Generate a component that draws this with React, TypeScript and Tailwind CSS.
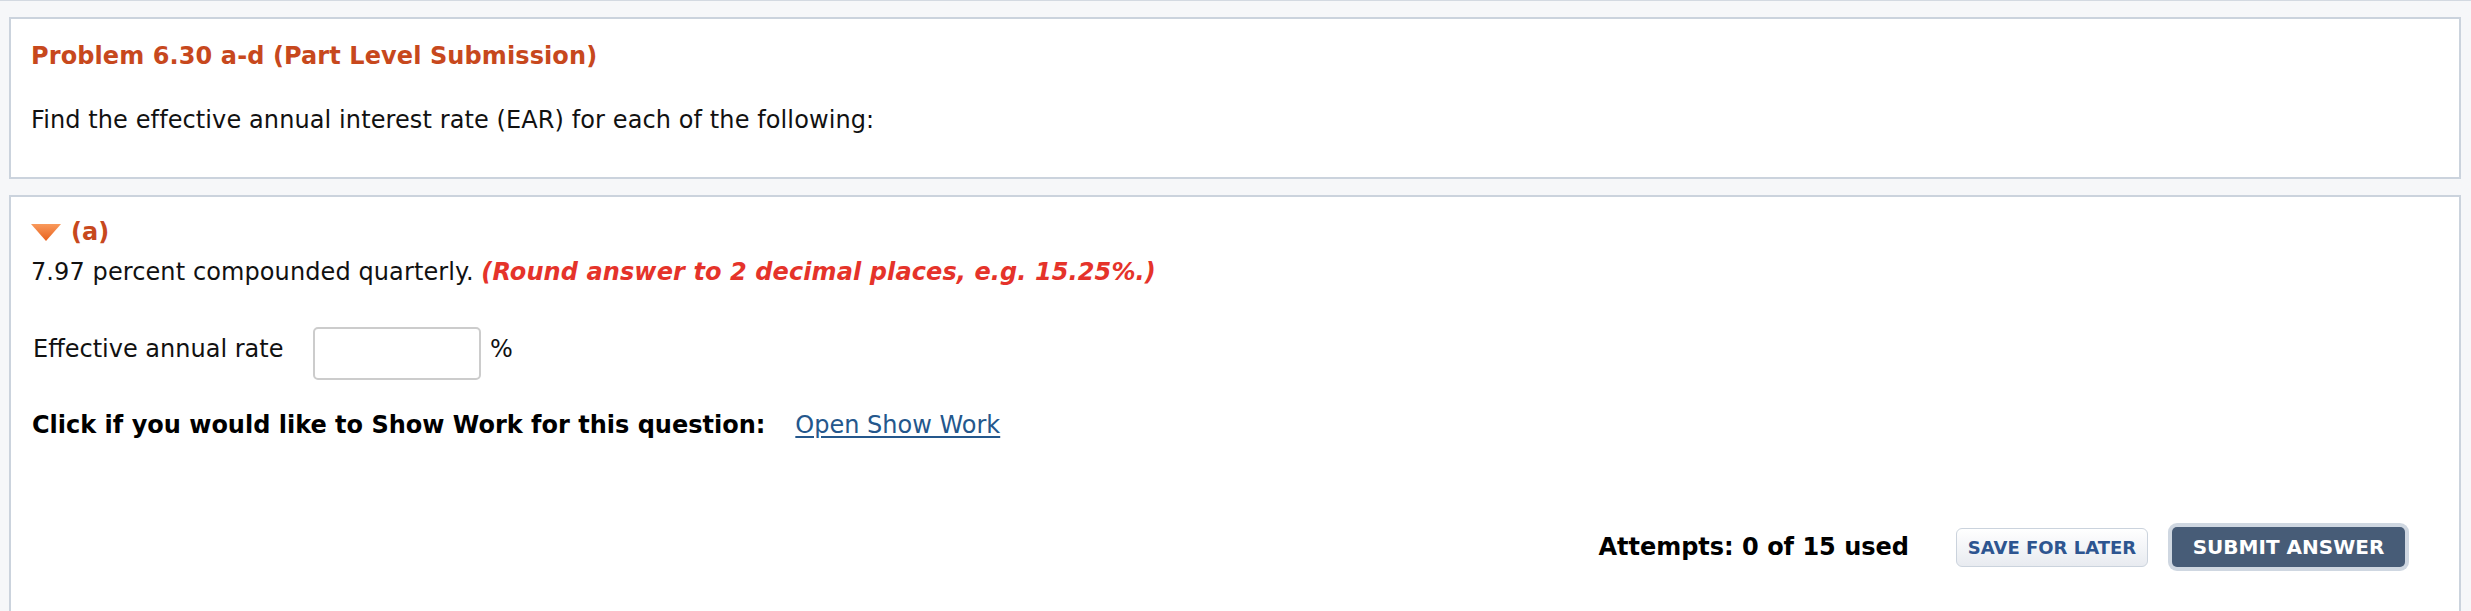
import React from "react";

const font = { fontFamily: '"DejaVu Sans", Verdana, sans-serif' };

function Triangle() {
  return (
    <svg width="30" height="18" viewBox="0 0 30 18" className="block">
      <defs>
        <linearGradient id="tg" x1="0" y1="0" x2="0" y2="1">
          <stop offset="0" stopColor="#f99a5c" />
          <stop offset="1" stopColor="#e8601c" />
        </linearGradient>
      </defs>
      <polygon points="0,0 30,0 15,17" fill="url(#tg)" />
    </svg>
  );
}

export default function App() {
  return (
    <div
      className="min-h-[611px] w-full border-t border-[#d3d9e1] bg-[#f6f7f9] pt-[16px] pl-[9px] pr-[10px] text-[24px] leading-[29px] text-[#111]"
      style={font}
    >
      <div className="border-2 border-[#cbd3dd] bg-white px-[20px] pt-[23px] pb-[42px]">
        <div className="font-bold tracking-[0.1px] text-[#c7481d]">Problem 6.30 a-d (Part Level Submission)</div>
        <div className="mt-[35px] tracking-[0.1px]">Find the effective annual interest rate (EAR) for each of the following:</div>
      </div>

      <div className="mt-[16px] border-2 border-b-0 border-[#cbd3dd] bg-white pl-[20px] pr-[54px] pt-[21px] pb-[60px]">
        <div className="flex items-center">
          <div className="mt-[1px]">
            <Triangle />
          </div>
          <span className="ml-[10px] font-bold text-[#c7481d]">(a)</span>
        </div>
        <div className="mt-[11px] tracking-[0.1px]">
          7.97 percent compounded quarterly.{" "}
          <span className="font-bold italic text-[#e5332a]">
            (Round answer to 2 decimal places, e.g. 15.25%.)
          </span>
        </div>

        <div className="mt-[40px] flex items-start">
          <div className="ml-[2px] mt-[8px] w-[280px] shrink-0">Effective annual rate</div>
          <input
            type="text"
            className="h-[53px] w-[168px] rounded-[5px] border-2 border-[#cccccc] bg-white outline-none"
          />
          <div className="ml-[9px] mt-[8px]">%</div>
        </div>

        <div className="mt-[31px] flex items-start">
          <span className="ml-[1px] font-bold text-black">
            Click if you would like to Show Work for this question:
          </span>
          <a href="#" className="ml-[30px] text-[#24578c] underline underline-offset-[3px]">
            Open Show Work
          </a>
        </div>

        <div className="mt-[87px] flex items-center justify-end">
          <span className="font-bold text-black">Attempts: 0 of 15 used</span>
          <button
            type="button"
            className="ml-[47px] flex h-[39px] w-[192px] items-center justify-center rounded-[6px] border-[1.5px] border-[#cbd3dd] bg-gradient-to-b from-white to-[#e8ebf0] text-[18px] font-bold text-[#2d5590]"
            style={font}
          >
            SAVE FOR LATER
          </button>
          <button
            type="button"
            className="ml-[24px] flex h-[40px] w-[233px] items-center justify-center rounded-[5px] bg-[#475c77] text-[20px] font-bold text-white shadow-[0_0_0_4px_#cfd7e1]"
            style={font}
          >
            SUBMIT ANSWER
          </button>
        </div>
      </div>
    </div>
  );
}
